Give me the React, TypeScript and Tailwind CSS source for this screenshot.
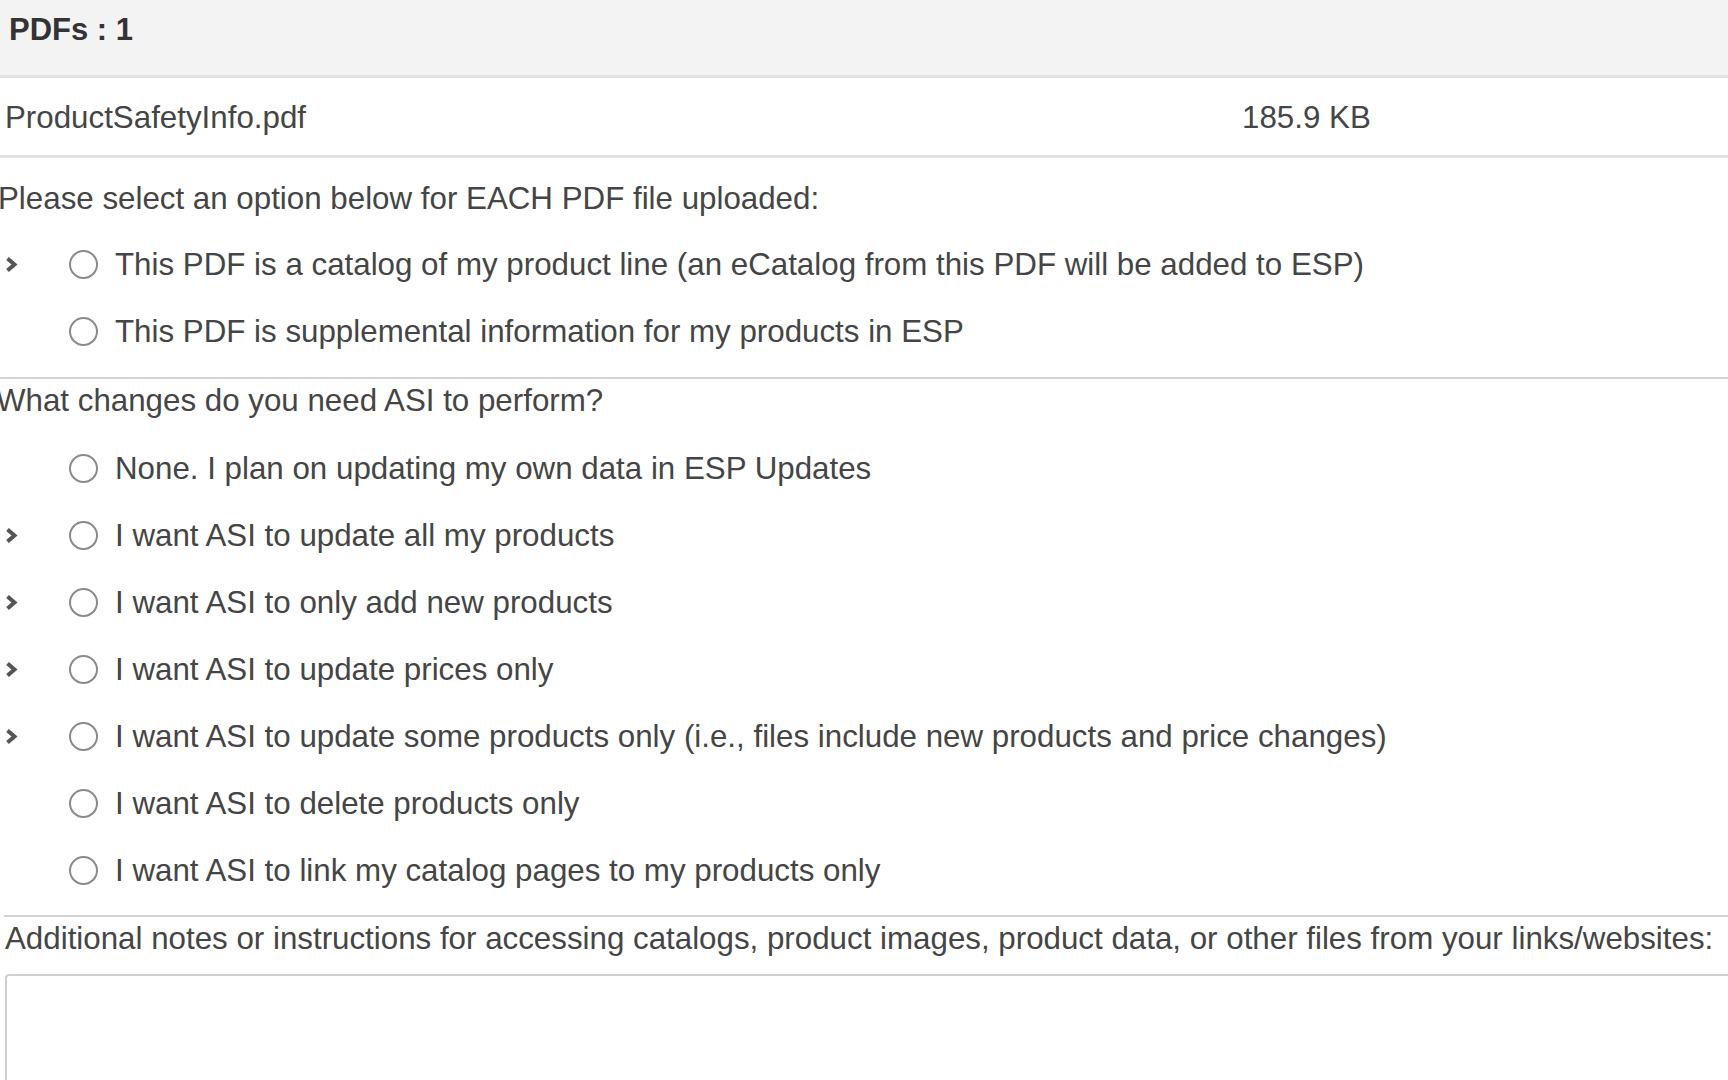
import React from "react";

function Chevron() {
  return (
    <svg width="13" height="17" viewBox="0 0 13 17" className="block">
      <polyline points="2.5,2.5 9.5,8.5 2.5,14.5" fill="none" stroke="#555" strokeWidth="4" strokeLinejoin="miter" />
    </svg>
  );
}

function RadioRow({ label, chevron }: { label: string; chevron?: boolean }) {
  return (
    <div className="flex h-[67px] items-center">
      <div className="flex w-[69px] items-center pl-[5px]">{chevron ? <Chevron /> : null}</div>
      <div className="h-[29px] w-[29px] shrink-0 rounded-full border-2 border-[#8a8a8a] bg-white" />
      <div className="ml-[17px] whitespace-nowrap">{label}</div>
    </div>
  );
}

export default function App() {
  return (
    <div className="h-[1080px] w-[1728px] overflow-hidden bg-white font-['Liberation_Sans',Arial,sans-serif] text-[31.3px] leading-none text-[#454545]">
      <div className="h-[78px] border-b-[3px] border-[#e2e2e2] bg-[#f3f3f3] pl-[9px] pt-[14px] text-[31px] font-bold text-[#333]">
        PDFs : 1
      </div>
      <div className="flex h-[80px] items-center border-b-[3px] border-[#e3e3e3] pt-[3px]">
        <div className="w-[1242px] pl-[5px]">ProductSafetyInfo.pdf</div>
        <div>185.9 KB</div>
      </div>
      <div className="flex h-[73px] items-center pt-[8px]">
        <span className="-ml-[2px]">Please select an option below for EACH PDF file uploaded:</span>
      </div>
      <RadioRow chevron label="This PDF is a catalog of my product line (an eCatalog from this PDF will be added to ESP)" />
      <RadioRow label="This PDF is supplemental information for my products in ESP" />
      <div className="mt-[12px] border-t-2 border-[#d4d4d4]" />
      <div className="flex h-[44px] items-center">
        <span className="-ml-[4px]">What changes do you need ASI to perform?</span>
      </div>
      <div className="mt-[12px]">
        <RadioRow label="None. I plan on updating my own data in ESP Updates" />
        <RadioRow chevron label="I want ASI to update all my products" />
        <RadioRow chevron label="I want ASI to only add new products" />
        <RadioRow chevron label="I want ASI to update prices only" />
        <RadioRow chevron label="I want ASI to update some products only (i.e., files include new products and price changes)" />
        <RadioRow label="I want ASI to delete products only" />
        <RadioRow label="I want ASI to link my catalog pages to my products only" />
      </div>
      <div className="ml-[4px] mt-[11px] border-t-2 border-[#d4d4d4]" />
      <div className="flex h-[44px] items-center pl-[5px]">
        Additional notes or instructions for accessing catalogs, product images, product data, or other files from your links/websites:
      </div>
      <div className="ml-[5px] mt-[13px] h-[200px] rounded-tl-[4px] border-l-2 border-t-2 border-[#d0d0d0] bg-white" />
    </div>
  );
}
